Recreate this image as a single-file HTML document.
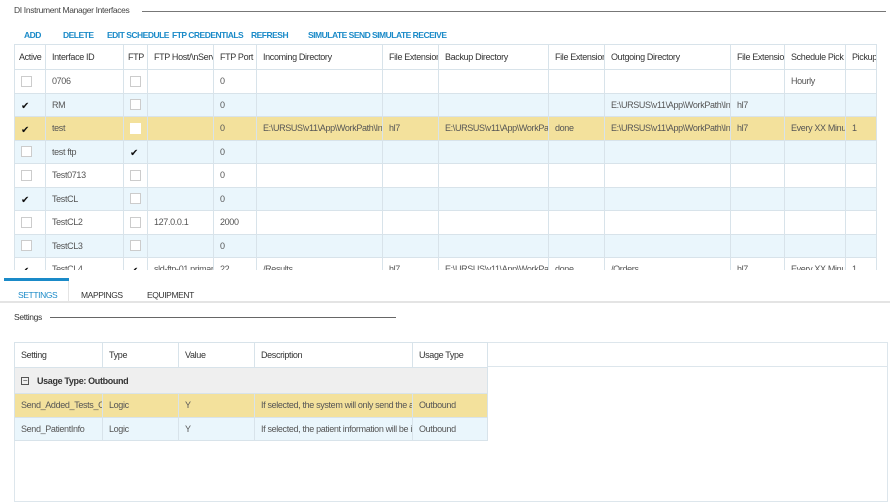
<!DOCTYPE html>
<html><head><meta charset="utf-8"><style>
*{box-sizing:border-box;margin:0;padding:0}
body{width:890px;height:500px;overflow:hidden;background:#fff;font-family:"Liberation Sans",sans-serif;font-size:9px;letter-spacing:-0.35px;color:#333;position:relative}
.abs{position:absolute}
table{border-collapse:collapse;table-layout:fixed;position:absolute}
td,th{border:1px solid #d8e3ea;white-space:nowrap;overflow:hidden;padding:0 0 0 6px;text-align:left;font-weight:normal;height:23.5px;color:#555;vertical-align:middle}
th{color:#333;height:25px;background:#fff}
tr.a td{background:#eaf6fc}
tr.h td{background:#f3e19c}
.cb{display:inline-block;width:11px;height:11px;border:1px solid #ccc;background:#fff;vertical-align:middle;position:relative}
.cb.c{border:none;background:transparent}
.cb.c:after{content:"✔";position:absolute;left:0;top:2px;font-size:10px;line-height:11px;color:#111}
.btn{position:absolute;top:30px;color:#1a8ac8;font-weight:bold;font-size:8.5px;letter-spacing:-0.5px}
.tab{position:absolute;top:290px;font-size:8.5px;letter-spacing:-0.4px}
</style></head><body>
<div class="abs" style="left:14px;top:5px;font-size:8.5px;color:#444">DI Instrument Manager Interfaces</div>
<div class="abs" style="left:142px;top:11px;width:744px;height:1px;background:#777"></div>
<div class="btn" style="left:24px">ADD</div>
<div class="btn" style="left:63px">DELETE</div>
<div class="btn" style="left:107px">EDIT SCHEDULE</div>
<div class="btn" style="left:172px">FTP CREDENTIALS</div>
<div class="btn" style="left:251px">REFRESH</div>
<div class="btn" style="left:308px">SIMULATE SEND</div>
<div class="btn" style="left:372px">SIMULATE RECEIVE</div>
<div class="abs" style="left:0;top:44px;width:890px;height:226px;overflow:hidden">
<table style="left:14px;top:0;width:862px">
<colgroup><col style="width:31px"><col style="width:78px"><col style="width:24px"><col style="width:66px"><col style="width:43px"><col style="width:126px"><col style="width:56px"><col style="width:110px"><col style="width:56px"><col style="width:126px"><col style="width:54px"><col style="width:61px"><col style="width:31px"></colgroup>
<tr><th style="padding-left:4px">Active</th><th>Interface ID</th><th style="padding-left:4px">FTP</th><th>FTP Host/\nServer</th><th>FTP Port</th><th>Incoming Directory</th><th>File Extension</th><th>Backup Directory</th><th>File Extension</th><th>Outgoing Directory</th><th>File Extension</th><th>Schedule Pick</th><th>Pickup Time</th></tr>
<tr><td><span class="cb"></span></td><td>0706</td><td><span class="cb"></span></td><td></td><td>0</td><td></td><td></td><td></td><td></td><td></td><td></td><td>Hourly</td><td></td></tr>
<tr class="a"><td><span class="cb c"></span></td><td>RM</td><td><span class="cb"></span></td><td></td><td>0</td><td></td><td></td><td></td><td></td><td>E:\URSUS\v11\App\WorkPath\Inst</td><td>hl7</td><td></td><td></td></tr>
<tr class="h"><td><span class="cb c"></span></td><td>test</td><td><span class="cb" style="border-color:#fff"></span></td><td></td><td>0</td><td>E:\URSUS\v11\App\WorkPath\Inst</td><td>hl7</td><td>E:\URSUS\v11\App\WorkPath\</td><td>done</td><td>E:\URSUS\v11\App\WorkPath\Inst</td><td>hl7</td><td>Every XX Minutes</td><td>1</td></tr>
<tr class="a"><td><span class="cb"></span></td><td>test ftp</td><td><span class="cb c"></span></td><td></td><td>0</td><td></td><td></td><td></td><td></td><td></td><td></td><td></td><td></td></tr>
<tr><td><span class="cb"></span></td><td>Test0713</td><td><span class="cb"></span></td><td></td><td>0</td><td></td><td></td><td></td><td></td><td></td><td></td><td></td><td></td></tr>
<tr class="a"><td><span class="cb c"></span></td><td>TestCL</td><td><span class="cb"></span></td><td></td><td>0</td><td></td><td></td><td></td><td></td><td></td><td></td><td></td><td></td></tr>
<tr><td><span class="cb"></span></td><td>TestCL2</td><td><span class="cb"></span></td><td>127.0.0.1</td><td>2000</td><td></td><td></td><td></td><td></td><td></td><td></td><td></td><td></td></tr>
<tr class="a"><td><span class="cb"></span></td><td>TestCL3</td><td><span class="cb"></span></td><td></td><td>0</td><td></td><td></td><td></td><td></td><td></td><td></td><td></td><td></td></tr>
<tr><td><span class="cb c"></span></td><td>TestCL4</td><td><span class="cb c"></span></td><td>sld-ftp-01.primary</td><td>22</td><td>/Results</td><td>hl7</td><td>E:\URSUS\v11\App\WorkPath\</td><td>done</td><td>/Orders</td><td>hl7</td><td>Every XX Minutes</td><td>1</td></tr>
</table>
</div>
<div class="abs" style="left:0;top:301px;width:890px;height:2px;background:#e4e4e4"></div>
<div class="abs" style="left:4px;top:278px;width:65px;height:3px;background:#1a8ac8"></div>
<div class="abs" style="left:68px;top:281px;width:1px;height:21px;background:#e4e4e4"></div>
<div class="tab" style="left:18px;color:#1a8ac8">SETTINGS</div>
<div class="tab" style="left:81px">MAPPINGS</div>
<div class="tab" style="left:147px">EQUIPMENT</div>
<div class="abs" style="left:14px;top:312px;font-size:8.5px">Settings</div>
<div class="abs" style="left:50px;top:317px;width:346px;height:1px;background:#666"></div>
<div class="abs" style="left:14px;top:342px;width:874px;height:160px;border:1px solid #dde6ec"></div>
<div class="abs" style="left:14px;top:342px;width:874px;height:25px;border-bottom:1px solid #dde6ec"></div>
<table style="left:14px;top:342px;width:473px">
<colgroup><col style="width:88px"><col style="width:76px"><col style="width:76px"><col style="width:158px"><col style="width:75px"></colgroup>
<tr><th>Setting</th><th>Type</th><th>Value</th><th>Description</th><th>Usage Type</th></tr>
<tr><td colspan="5" style="background:#efefef;font-weight:bold;height:26px;color:#333"><span style="display:inline-block;width:8px;height:8px;border:1px solid #555;font-size:8px;line-height:6px;text-align:center;margin-right:8px;font-weight:normal;vertical-align:middle">−</span>Usage Type: Outbound</td></tr>
<tr class="h"><td>Send_Added_Tests_Only</td><td>Logic</td><td>Y</td><td>If selected, the system will only send the added</td><td>Outbound</td></tr>
<tr class="a"><td>Send_PatientInfo</td><td>Logic</td><td>Y</td><td>If selected, the patient information will be included</td><td>Outbound</td></tr>
</table>
</body></html>
